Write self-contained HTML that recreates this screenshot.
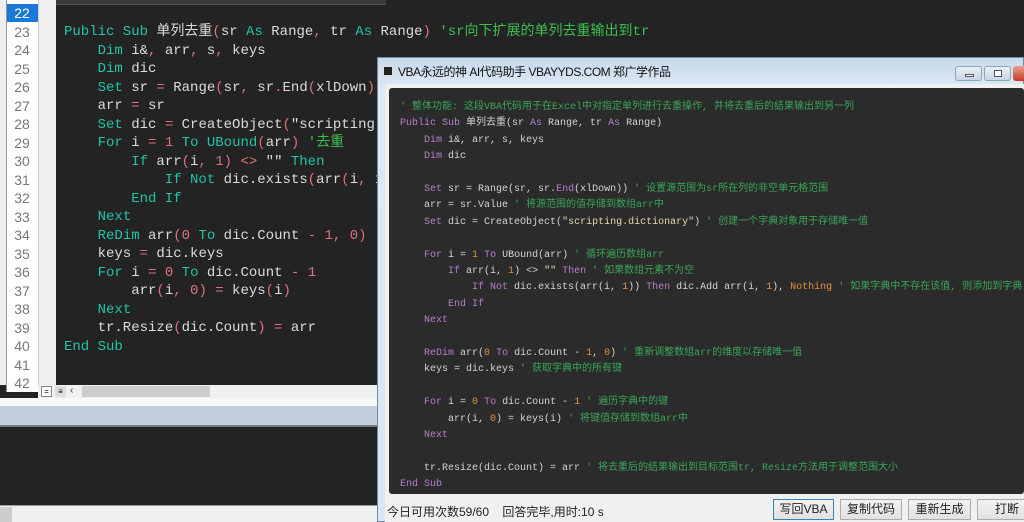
<!DOCTYPE html>
<html><head><meta charset="utf-8"><style>
*{margin:0;padding:0;box-sizing:border-box}
body{width:1024px;height:522px;overflow:hidden;position:relative;background:#232323;font-family:"Liberation Sans","Noto Sans CJK SC",sans-serif}
.abs{position:absolute}
.ln{position:absolute;left:6px;width:32px;text-align:center;font:14px "Liberation Sans",sans-serif;color:#777;height:18.5px;line-height:18.5px}
.cl{position:absolute;left:64px;font:14px "Liberation Mono","Noto Sans CJK SC",monospace;color:#dcdcdc;white-space:pre;height:18.5px;line-height:18.5px}
.k{color:#22c3a6}.p{color:#e0707a}.c{color:#3bbf4f}
.wl{position:absolute;left:400px;font:10px "Liberation Mono","Noto Sans CJK SC",monospace;color:#d4d4d4;white-space:pre;height:16.4px;line-height:16.4px}
.wk{color:#b77fc9}.wn{color:#e3903a}.wc{color:#3aa55a}.ws{color:#e4d7b0}
.btn{position:absolute;top:499px;height:21px;border:1px solid #acacac;background:linear-gradient(#f2f2f2,#e1e1e1);font:12px "Liberation Sans","Noto Sans CJK SC",sans-serif;color:#222;text-align:center;line-height:19px}
</style></head><body>
<div class="abs" style="left:0;top:0;width:56px;height:385px;background:#f0f0f0"></div>
<div class="abs" style="left:6px;top:0;width:33px;height:392px;background:#fff;border-left:1px solid #999;border-right:1px solid #ccc"></div>
<div class="abs" style="left:7px;top:4px;width:31px;height:18px;background:#1a78d8"></div>
<div class="abs" style="left:56px;top:0;width:330px;height:4px;background:#3a3a3a"></div>
<div class="abs" style="left:56px;top:4px;width:330px;height:1px;background:#555"></div>
<div class="ln" style="top:4px;color:#fff">22</div>
<div class="ln" style="top:22.5px">23</div><div class="ln" style="top:41px">24</div><div class="ln" style="top:59.5px">25</div><div class="ln" style="top:78px">26</div><div class="ln" style="top:96.5px">27</div><div class="ln" style="top:115px">28</div><div class="ln" style="top:133.5px">29</div><div class="ln" style="top:152px">30</div><div class="ln" style="top:170.5px">31</div><div class="ln" style="top:189px">32</div><div class="ln" style="top:207.5px">33</div><div class="ln" style="top:226px">34</div><div class="ln" style="top:244.5px">35</div><div class="ln" style="top:263px">36</div><div class="ln" style="top:281.5px">37</div><div class="ln" style="top:300px">38</div><div class="ln" style="top:318.5px">39</div><div class="ln" style="top:337px">40</div><div class="ln" style="top:355.5px">41</div><div class="ln" style="top:374px">42</div>
<div class="cl" style="top:23px"><span class="k">Public Sub</span> 单列去重<span class="p">(</span>sr <span class="k">As</span> Range<span class="p">,</span> tr <span class="k">As</span> Range<span class="p">)</span> <span class="c">'sr向下扩展的单列去重输出到tr</span></div>
<div class="cl" style="top:41.5px">    <span class="k">Dim</span> i&amp;<span class="p">,</span> arr<span class="p">,</span> s<span class="p">,</span> keys</div>
<div class="cl" style="top:60px">    <span class="k">Dim</span> dic</div>
<div class="cl" style="top:78.5px">    <span class="k">Set</span> sr <span class="p">=</span> Range<span class="p">(</span>sr<span class="p">,</span> sr<span class="p">.</span>End<span class="p">(</span>xlDown<span class="p">))</span></div>
<div class="cl" style="top:97px">    arr <span class="p">=</span> sr</div>
<div class="cl" style="top:115.5px">    <span class="k">Set</span> dic <span class="p">=</span> CreateObject<span class="p">(</span>"scripting.dictionary"<span class="p">)</span></div>
<div class="cl" style="top:134px">    <span class="k">For</span> i <span class="p">= 1</span> <span class="k">To UBound</span><span class="p">(</span>arr<span class="p">)</span> <span class="c">'去重</span></div>
<div class="cl" style="top:152.5px">        <span class="k">If</span> arr<span class="p">(</span>i<span class="p">, 1) &lt;&gt;</span> "" <span class="k">Then</span></div>
<div class="cl" style="top:171px">            <span class="k">If Not</span> dic.exists<span class="p">(</span>arr<span class="p">(</span>i<span class="p">,</span> 1<span class="p">))</span></div>
<div class="cl" style="top:189.5px">        <span class="k">End If</span></div>
<div class="cl" style="top:208px">    <span class="k">Next</span></div>
<div class="cl" style="top:226.5px">    <span class="k">ReDim</span> arr<span class="p">(0</span> <span class="k">To</span> dic.Count <span class="p">- 1, 0)</span></div>
<div class="cl" style="top:245px">    keys <span class="p">=</span> dic.keys</div>
<div class="cl" style="top:263.5px">    <span class="k">For</span> i <span class="p">= 0</span> <span class="k">To</span> dic.Count <span class="p">- 1</span></div>
<div class="cl" style="top:282px">        arr<span class="p">(</span>i<span class="p">, 0) =</span> keys<span class="p">(</span>i<span class="p">)</span></div>
<div class="cl" style="top:300.5px">    <span class="k">Next</span></div>
<div class="cl" style="top:319px">    tr.Resize<span class="p">(</span>dic.Count<span class="p">) =</span> arr</div>
<div class="cl" style="top:337.5px"><span class="k">End Sub</span></div>
<div class="abs" style="left:38px;top:385px;width:340px;height:13px;background:#f0f0f0"></div>
<div class="abs" style="left:41px;top:386px;width:11px;height:11px;border:1px solid #888;background:#fff;font-size:8px;line-height:9px;text-align:center">=</div>
<div class="abs" style="left:55px;top:386px;width:11px;height:11px;background:#ddd;font-size:8px;line-height:11px;text-align:center">≡</div>
<div class="abs" style="left:70px;top:385px;font-size:10px;color:#333">‹</div>
<div class="abs" style="left:82px;top:386px;width:128px;height:11px;background:#cdcdcd"></div>
<div class="abs" style="left:0;top:398px;width:378px;height:8px;background:#f8f8f8"></div>
<div class="abs" style="left:0;top:406px;width:378px;height:19px;background:#c2d0dd"></div>
<div class="abs" style="left:0;top:425px;width:378px;height:2px;background:#777"></div>
<div class="abs" style="left:0;top:505px;width:378px;height:17px;background:#f0f0f0;border-top:1px solid #999"></div>
<div class="abs" style="left:0;top:507px;width:12px;height:15px;background:#cdcdcd"></div>
<div class="abs" style="left:377px;top:57px;width:647px;height:465px;background:linear-gradient(#c8d9ec,#dde8f5 30px,#dae6f3);border:1px solid #6f8aa8"></div>
<div class="abs" style="left:382px;top:65px;width:12px;height:12px;background:#222;border:2px solid #ddd"></div>
<div class="abs" style="left:398px;top:63px;font:12px 'Liberation Sans','Noto Sans CJK SC',sans-serif;color:#111;letter-spacing:-0.5px">VBA永远的神 AI代码助手 VBAYYDS.COM 郑广学作品</div>
<div class="abs" style="left:955px;top:66px;width:27px;height:15px;border:1px solid #8aa;border-radius:3px;background:linear-gradient(#e8f0f8,#c8d6e6)"><div style="position:absolute;left:9px;top:7px;width:9px;height:3px;background:#fff;border:1px solid #555"></div></div>
<div class="abs" style="left:984px;top:66px;width:27px;height:15px;border:1px solid #8aa;border-radius:3px;background:linear-gradient(#e8f0f8,#c8d6e6)"><div style="position:absolute;left:9px;top:3px;width:8px;height:7px;background:#fff;border:1px solid #555"></div></div>
<div class="abs" style="left:1013px;top:66px;width:14px;height:15px;border-radius:3px;background:linear-gradient(#e8a090,#c43b20)"></div>
<div class="abs" style="left:385px;top:84px;width:639px;height:438px;background:#f0f0f0"></div>
<div class="abs" style="left:389px;top:88px;width:635px;height:406px;background:#2b2b2b;border-radius:3px"></div>
<div class="wl" style="top:100px"><span class="wc">' 整体功能: 这段VBA代码用于在Excel中对指定单列进行去重操作, 并将去重后的结果输出到另一列</span></div>
<div class="wl" style="top:116.4px"><span class="wk">Public Sub</span> 单列去重(sr <span class="wk">As</span> Range, tr <span class="wk">As</span> Range)</div>
<div class="wl" style="top:132.8px">    <span class="wk">Dim</span> i&amp;, arr, s, keys</div>
<div class="wl" style="top:149.2px">    <span class="wk">Dim</span> dic</div>
<div class="wl" style="top:182px">    <span class="wk">Set</span> sr = Range(sr, sr.<span class="wk">End</span>(xlDown)) <span class="wc">' 设置源范围为sr所在列的非空单元格范围</span></div>
<div class="wl" style="top:198.4px">    arr = sr.Value <span class="wc">' 将源范围的值存储到数组arr中</span></div>
<div class="wl" style="top:214.8px">    <span class="wk">Set</span> dic = CreateObject(<span class="ws">"scripting.dictionary"</span>) <span class="wc">' 创建一个字典对象用于存储唯一值</span></div>
<div class="wl" style="top:247.6px">    <span class="wk">For</span> i = <span class="wn">1</span> <span class="wk">To</span> UBound(arr) <span class="wc">' 循环遍历数组arr</span></div>
<div class="wl" style="top:264px">        <span class="wk">If</span> arr(i, <span class="wn">1</span>) &lt;&gt; <span class="ws">""</span> <span class="wk">Then</span> <span class="wc">' 如果数组元素不为空</span></div>
<div class="wl" style="top:280.4px">            <span class="wk">If Not</span> dic.exists(arr(i, <span class="wn">1</span>)) <span class="wk">Then</span> dic.Add arr(i, <span class="wn">1</span>), <span class="wn">Nothing</span> <span class="wc">' 如果字典中不存在该值, 则添加到字典</span></div>
<div class="wl" style="top:296.8px">        <span class="wk">End If</span></div>
<div class="wl" style="top:313.2px">    <span class="wk">Next</span></div>
<div class="wl" style="top:346px">    <span class="wk">ReDim</span> arr(<span class="wn">0</span> <span class="wk">To</span> dic.Count - <span class="wn">1</span>, <span class="wn">0</span>) <span class="wc">' 重新调整数组arr的维度以存储唯一值</span></div>
<div class="wl" style="top:362.4px">    keys = dic.keys <span class="wc">' 获取字典中的所有键</span></div>
<div class="wl" style="top:395.2px">    <span class="wk">For</span> i = <span class="wn">0</span> <span class="wk">To</span> dic.Count - <span class="wn">1</span> <span class="wc">' 遍历字典中的键</span></div>
<div class="wl" style="top:411.6px">        arr(i, <span class="wn">0</span>) = keys(i) <span class="wc">' 将键值存储到数组arr中</span></div>
<div class="wl" style="top:428px">    <span class="wk">Next</span></div>
<div class="wl" style="top:460.8px">    tr.Resize(dic.Count) = arr <span class="wc">' 将去重后的结果输出到目标范围tr, Resize方法用于调整范围大小</span></div>
<div class="wl" style="top:477.2px"><span class="wk">End Sub</span></div>
<div class="abs" style="left:387px;top:503px;font:12px 'Liberation Sans','Noto Sans CJK SC',sans-serif;color:#222;white-space:pre">今日可用次数59/60    回答完毕,用时:10 s</div>
<div class="btn" style="left:773px;width:61px;border-color:#3c7fb1">写回VBA</div>
<div class="btn" style="left:840px;width:62px">复制代码</div>
<div class="btn" style="left:908px;width:63px">重新生成</div>
<div class="btn" style="left:977px;width:60px">打断</div>
</body></html>
